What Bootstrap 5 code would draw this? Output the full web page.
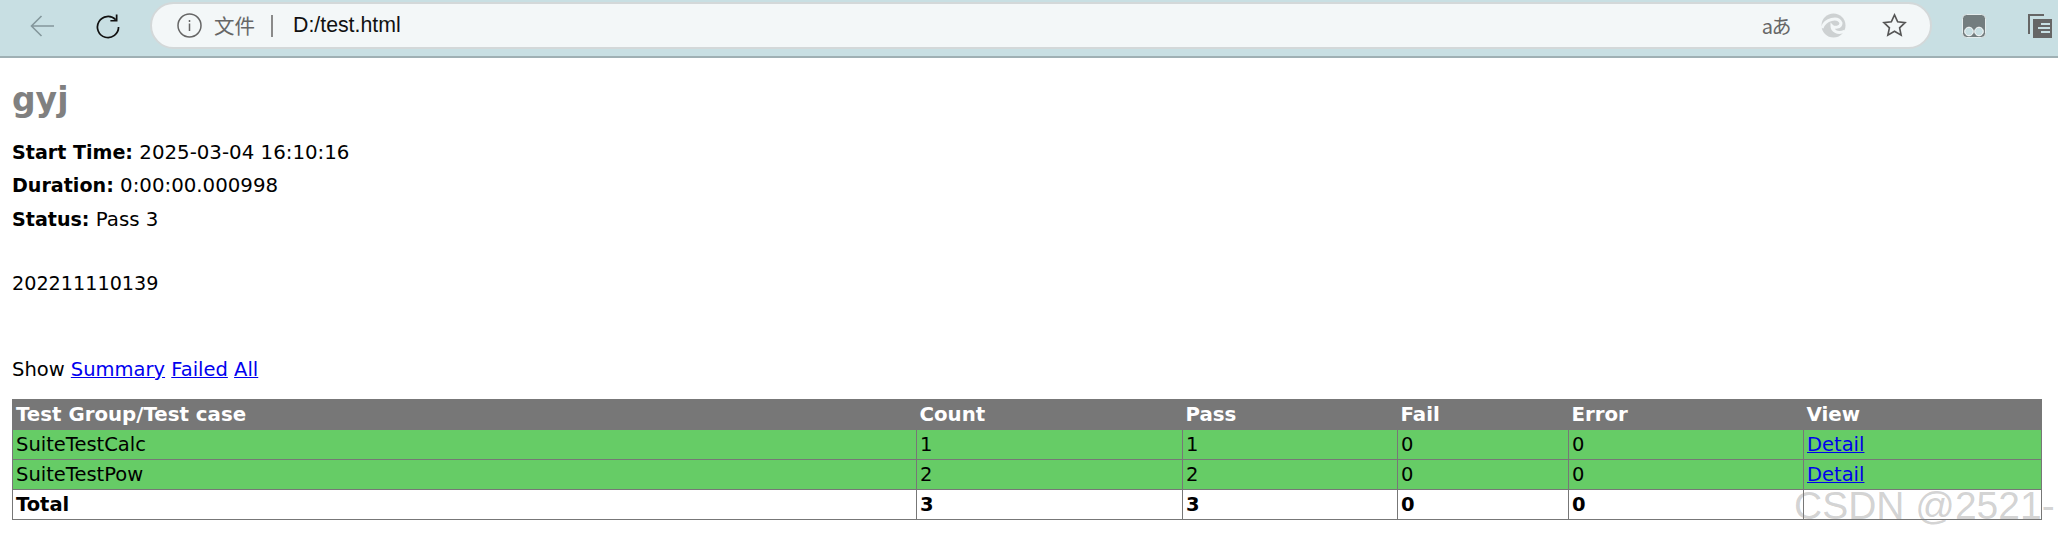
<!doctype html>
<html lang="zh"><head><meta charset="utf-8"><title>test</title>
<link href="https://cdn.jsdelivr.net/npm/bootstrap@5.3.0/dist/css/bootstrap.min.css" rel="stylesheet">
<style>
html,body{height:100%;overflow:hidden}
body{font-family:"DejaVu Sans",Verdana,sans-serif;font-size:19.5px;color:#000;background:#fff}
.tool-bar{height:58px;background:#c8dfe3;border-bottom:2px solid #9fb0b4}
.tool-ico{flex:none;display:flex;align-items:center;justify-content:center;height:52px}
.ico-back{width:24px;margin-left:30px}
.ico-reload{width:24px;margin-left:42px}
.ico-collect{width:24px;margin-left:30px}
.ico-pages{width:24px;margin-left:42px}
.addr{flex:none;height:47px;margin-top:2px;margin-left:30px;width:1782px;padding-left:25px;background:#f3f7f8;border:2px solid #d3d8d9;border-radius:24px}
.file-word{color:#666;font-family:"Noto Sans CJK SC",sans-serif;font-size:20.500px;margin-left:12px}
.addr-sep{width:2px;height:22px;background:#8a8a8a;margin:0 20px 0 16px}
.url-text{font-family:"Liberation Sans",sans-serif;font-size:21.300px;color:#111}
.addr-right{gap:36px;margin-right:23px;margin-left:auto}
.translate-ico{font-size:20px;color:#666;font-family:"Noto Sans CJK JP",sans-serif;letter-spacing:-1.500px;margin-right:-5px}
.report{padding:22px 12px 0}
.report-title{font-size:33px;font-weight:700;color:#808080;line-height:38px;margin:1px 0 17px}
.attr{line-height:33.300px;margin:0;font-size:19.800px}
.attr strong{font-size:19.100px}
.desc-line{margin:31px 0 0;line-height:34px;font-size:19.200px}
.show-line{margin:52px 0 0;line-height:34px}
.report a{color:#00e}
.res{width:2030px;table-layout:fixed;border-collapse:collapse;margin-top:12px;font-size:19.500px;line-height:25px;border:1px solid #777}
.res th{background:#777;color:#fff;font-weight:700;padding:1px 3px;height:30px;border:0;font-size:19.800px}
.res td{padding:2px 3px;height:30px;border:1px solid #777}
.res .ok td{background:#6c6}
.res .sum td{background:#fff;font-weight:700}
.mark-wm{position:absolute;left:1794px;top:483px;font-family:"Liberation Sans",sans-serif;font-size:39px;line-height:46px;color:rgba(130,130,130,.36);white-space:nowrap;pointer-events:none}
</style></head><body>
<div class="tool-bar d-flex align-items-start">
 <div class="tool-ico ico-back"><svg width="24" height="22" viewBox="0 0 24 22" fill="none" stroke="#84979c" stroke-width="1.6"><path d="M24 11H1.500M11.500 1 1.500 11l10 10"/></svg></div>
 <div class="tool-ico ico-reload"><svg width="25" height="25" viewBox="0 0 25 25" fill="none" stroke="#111" stroke-width="1.800"><path d="M20.500 5.500A11 11 0 1 0 23.500 13"/><path d="M21.500 0v6.500H15"/></svg></div>
 <div class="addr d-flex align-items-center">
  <svg width="25" height="25" viewBox="0 0 25 25" fill="none" stroke="#666" stroke-width="1.500"><circle cx="12.500" cy="12.500" r="11.500"/><path d="M12.500 10.500v7.500M12.500 7v2"/></svg>
  <span class="file-word">文件</span><span class="addr-sep"></span><span class="url-text">D:/test.html</span>
  <span class="addr-right d-flex align-items-center">
   <span class="translate-ico">aあ</span>
   <svg width="25" height="25" viewBox="0 0 25 25"><circle cx="12.500" cy="12.500" r="12" fill="#cdd1d2"/><path d="M1 15C4 6 17 3 20 10c0 5-7 5-9 3 0 4 5 9 13 5" fill="none" stroke="#f3f7f8" stroke-width="3"/></svg>
   <svg width="25" height="25" viewBox="0 0 26 26" fill="none" stroke="#555" stroke-width="1.700"><path d="M13 2l3.300 7.200 7.700.9-5.700 5.300 1.600 7.700L13 19l-6.900 4.100 1.600-7.700L2 10.100l7.700-.9z"/></svg>
  </span>
 </div>
 <div class="tool-ico ico-collect"><svg width="24" height="24" viewBox="0 0 24 24"><rect x=".5" y=".5" width="23" height="23" rx="4" fill="#737d7f" stroke="#e4eced"/><circle cx="7" cy="17.500" r="4.300" fill="#c8dfe3" stroke="#fff"/><circle cx="17" cy="17.500" r="4.300" fill="#c8dfe3" stroke="#fff"/></svg></div>
 <div class="tool-ico ico-pages"><svg width="24" height="24" viewBox="0 0 24 24"><path d="M1 20V1h15" fill="none" stroke="#666" stroke-width="2"/><path d="M5 5h19v19H5z" fill="#666"/><path d="M13 10h9M10 14h12M13 18h9" stroke="#c8dfe3" stroke-width="2"/></svg></div>
</div>
<main class="report">
 <h1 class="report-title">gyj</h1>
 <p class="attr"><strong>Start Time:</strong> 2025-03-04 16:10:16</p>
 <p class="attr"><strong>Duration:</strong> 0:00:00.000998</p>
 <p class="attr"><strong>Status:</strong> Pass 3</p>
 <p class="desc-line">202211110139</p>
 <p class="show-line">Show <a href="#">Summary</a> <a href="#">Failed</a> <a href="#">All</a></p>
 <table class="res">
  <colgroup><col style="width:904px"><col style="width:266px"><col style="width:215px"><col style="width:171px"><col style="width:235px"><col></colgroup>
  <thead><tr><th>Test Group/Test case</th><th>Count</th><th>Pass</th><th>Fail</th><th>Error</th><th>View</th></tr></thead>
  <tbody>
   <tr class="ok"><td>SuiteTestCalc</td><td>1</td><td>1</td><td>0</td><td>0</td><td><a href="#">Detail</a></td></tr>
   <tr class="ok"><td>SuiteTestPow</td><td>2</td><td>2</td><td>0</td><td>0</td><td><a href="#">Detail</a></td></tr>
   <tr class="sum"><td>Total</td><td>3</td><td>3</td><td>0</td><td>0</td><td></td></tr>
  </tbody>
 </table>
</main>
<div class="mark-wm">CSDN @2521-</div>
<script src="https://cdn.jsdelivr.net/npm/bootstrap@5.3.0/dist/js/bootstrap.bundle.min.js"></script>
</body></html>
